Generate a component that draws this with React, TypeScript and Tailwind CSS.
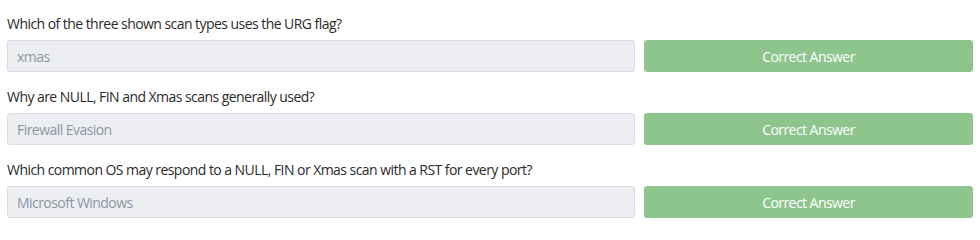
import React from "react";

const items = [
  { q: "Which of the three shown scan types uses the URG flag?", a: "xmas" },
  { q: "Why are NULL, FIN and Xmas scans generally used?", a: "Firewall Evasion" },
  { q: "Which common OS may respond to a NULL, FIN or Xmas scan with a RST for every port?", a: "Microsoft Windows" },
];

export default function App() {
  return (
    <div
      className="w-[980px] h-[229px] bg-white px-[7px] pt-[12px] flex flex-col gap-[13px] tracking-[-0.55px]"
      style={{ fontFamily: '"Open Sans", "Noto Sans", sans-serif' }}
    >
      {items.map((it) => (
        <div key={it.q} className="flex flex-col gap-[4px]">
          <p className="text-[14px] leading-[24px] text-[#2b2b2b]">{it.q}</p>
          <div className="flex gap-[9px] h-[32px]">
            <div className="flex-1 flex items-center rounded-[3px] border border-[#d9dde3] bg-[#eceef2] px-[9px] text-[14px] text-[#8c96a2]">
              {it.a}
            </div>
            <button className="w-[329px] rounded-[3px] bg-[#8dc58c] text-white text-[14px] tracking-[-0.55px]">
              Correct Answer
            </button>
          </div>
        </div>
      ))}
    </div>
  );
}
